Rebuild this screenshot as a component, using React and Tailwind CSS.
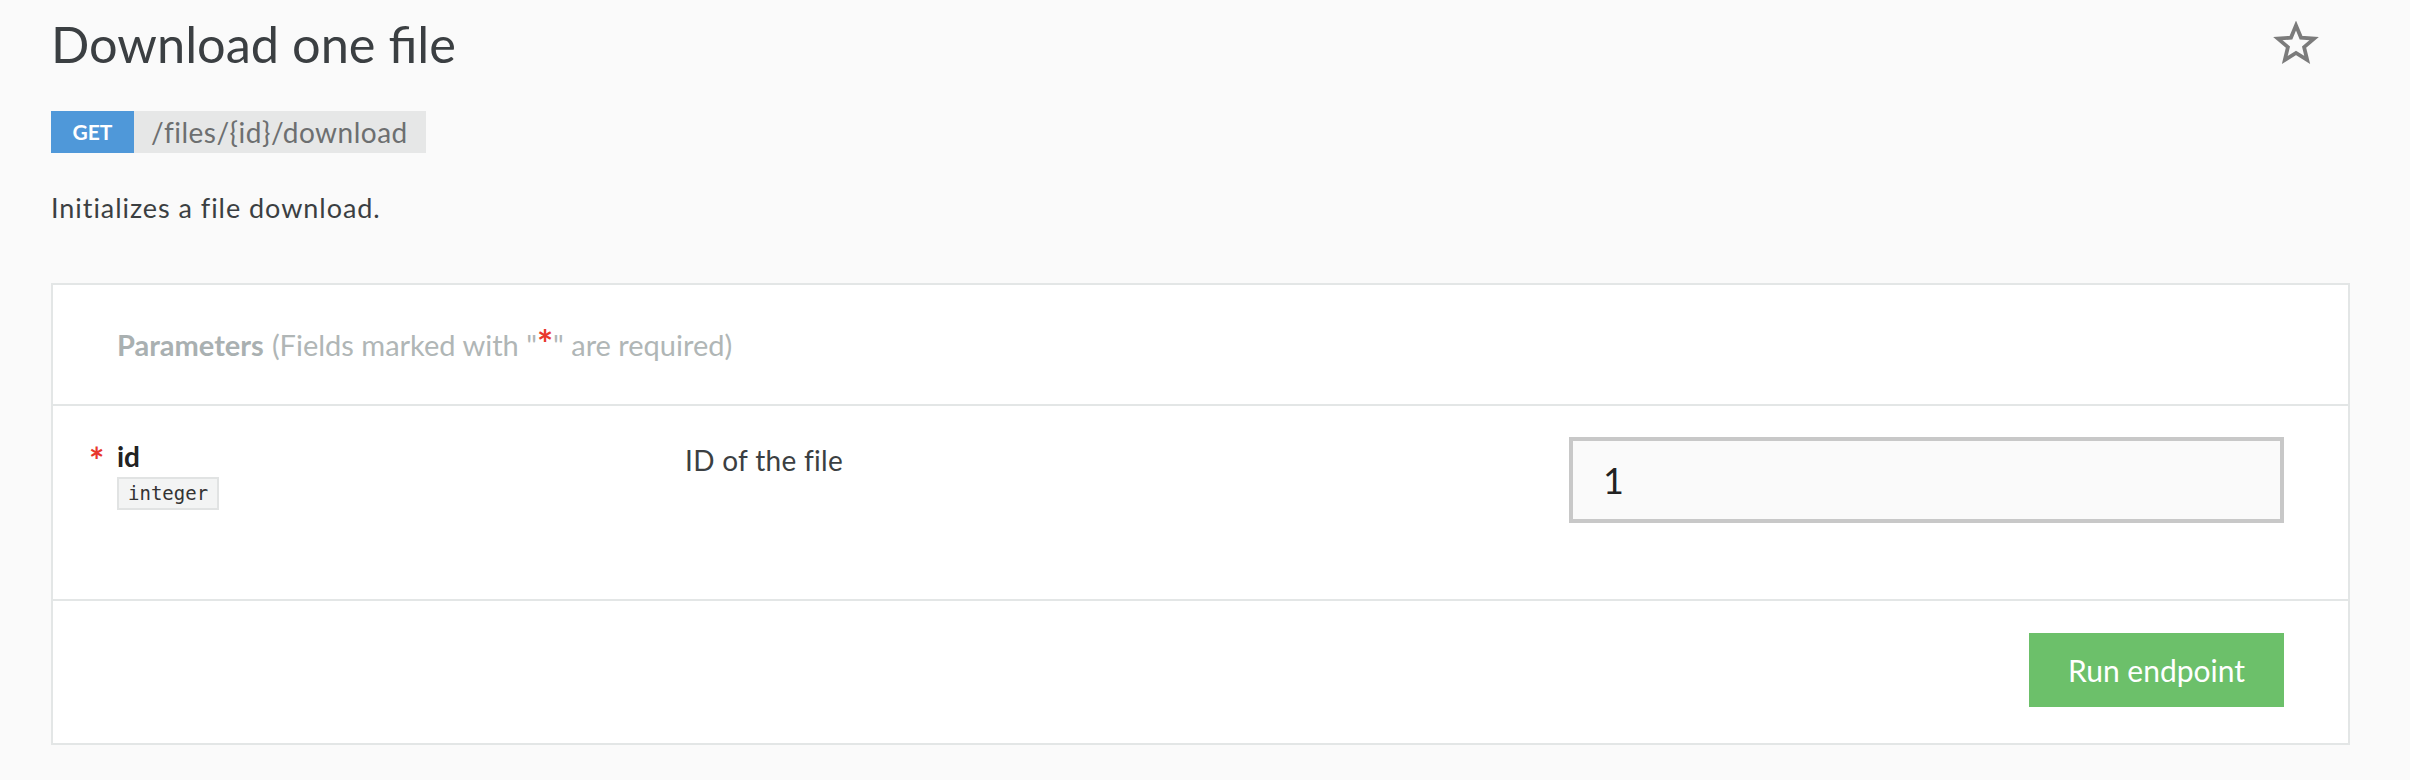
import React, { useState } from 'react';

function StarIcon() {
  return (
    <svg width="46" height="44" viewBox="0 0 46 44" fill="none">
      <polygon
        points="23,4.5 28,16.6 41.1,17.6 31.1,26.1 34.2,38.9 23,32 11.8,38.9 14.9,26.1 4.9,17.6 18,16.6"
        stroke="#7b7b7b"
        strokeWidth="3.8"
        strokeLinejoin="miter"
      />
    </svg>
  );
}

export default function App() {
  const [id, setId] = useState('1');

  return (
    <div className="min-h-screen bg-[#fafafa] pl-[51px] pr-[60px] font-['Lato',sans-serif] text-[#3b3f42]">
      {/* Title row */}
      <div className="flex items-start justify-between">
        <h1 className="pt-[16px] text-[50.5px] leading-[56px] font-normal">Download one file</h1>
        <div className="mt-[21px] mr-[31px]">
          <StarIcon />
        </div>
      </div>

      {/* Method + path */}
      <div className="mt-[39px] flex h-[42px] items-stretch">
        <span className="flex w-[83px] items-center justify-center bg-[#4f98d9] text-[21px] font-bold text-white">
          GET
        </span>
        <span className="flex items-center bg-[#e6e7e7] pl-[17px] pr-[18px] text-[28px] tracking-[0.5px] text-[#6d6f70]">
          /files/{'{id}'}/download
        </span>
      </div>

      <p className="mt-[40px] text-[27px] leading-[30px] tracking-[0.95px]">Initializes a file download.</p>

      {/* Parameters card */}
      <div className="mt-[60px] border-2 border-[#e3e6e6] bg-white">
        <div className="flex h-[121px] items-center border-b-2 border-[#e3e6e6] px-[64px] text-[29px] text-[#b0b6b6]">
          <span className="font-bold text-[#a9b0b1]">Parameters</span>
          <span className="ml-[8px]">
            (Fields marked with "
            <span className="inline-block h-[30px] align-top text-[38px] leading-[40px] font-bold text-[#e8372c]">*</span>
            " are required)
          </span>
        </div>

        <div className="flex border-b-2 border-[#e3e6e6] px-[64px] pt-[31px] pb-[76px]">
          <div className="w-[568px] pt-[3px]">
            <div className="flex items-start">
              <span className="-ml-[28px] h-[32px] w-[28px] text-[36px] leading-[40px] font-bold text-[#e8372c]">*</span>
              <span className="text-[28px] leading-[32px] font-bold text-[#222]">id</span>
            </div>
            <span className="mt-[5px] inline-block border-2 border-[#e1e3e3] bg-[#f3f4f4] px-[9px] font-['DejaVu_Sans_Mono',monospace] text-[19px] leading-[29px] text-[#333]">
              integer
            </span>
          </div>
          <div className="flex-1 pt-[7px] text-[28px] leading-[32px] tracking-[0.3px] text-[#3b3f42]">ID of the file</div>
          <input
            value={id}
            onChange={(e) => setId(e.target.value)}
            className="h-[86px] w-[715px] border-4 border-[#c8c8c8] bg-[#fafafa] pl-[30px] font-['Lato',sans-serif] text-[36px] text-[#222] outline-none"
          />
        </div>

        <div className="flex justify-end px-[64px] pt-[32px] pb-[36px]">
          <button className="h-[74px] w-[255px] bg-[#6cc06a] text-[30px] text-white">Run endpoint</button>
        </div>
      </div>
    </div>
  );
}
